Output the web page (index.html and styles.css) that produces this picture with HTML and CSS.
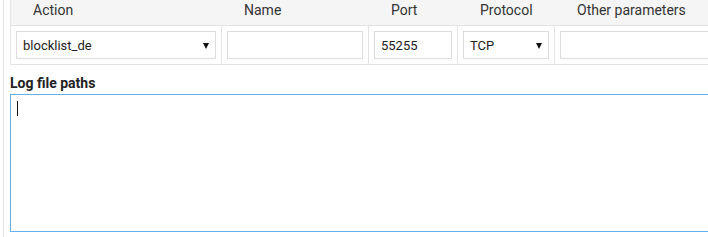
FILE: index.html
```html
<!DOCTYPE html>
<html lang="en">
<head>
    <meta charset="UTF-8">
    <title>Jail action</title>
    <link rel="stylesheet" href="styles.css">
</head>
<body>

    <!-- Panel with light left rule -->
    <div class="panel">

        <!-- Action table -->
        <div class="action-table">
            <div class="table-head">
                <div class="head-cell">Action</div>
                <div class="head-cell">Name</div>
                <div class="head-cell">Port</div>
                <div class="head-cell">Protocol</div>
                <div class="head-cell">Other parameters</div>
            </div>
            <div class="table-row">
                <div class="cell">
                    <div class="select-field">
                        <span>blocklist_de</span>
                        <span class="arrow"></span>
                    </div>
                </div>
                <div class="cell">
                    <input type="text" class="input-field" value="">
                </div>
                <div class="cell">
                    <input type="text" class="input-field" value="55255">
                </div>
                <div class="cell">
                    <div class="select-field">
                        <span>TCP</span>
                        <span class="arrow"></span>
                    </div>
                </div>
                <div class="cell">
                    <input type="text" class="input-field" value="">
                </div>
            </div>
        </div>

        <label class="field-label">Log file paths</label>
        <div class="log-box"><span class="caret"></span></div>
    </div>

</body>
</html>
```

FILE: styles.css
```css
body {
    margin: 0;
    font-family: Roboto, "Liberation Sans", Arial, sans-serif;
    color: #333;
    background-color: white;
    overflow: hidden;
    width: 708px;
    height: 237px;
}

* {
    box-sizing: border-box;
}

/* Light rule down the left side */
.panel {
    margin-left: 3px;
    border-left: 1px solid #e6e6e6;
    padding-left: 6px;
    width: 800px;
    height: 237px;
}

.action-table {
    border-left: 1px solid #e3e3e3;
}

.table-head,
.table-row {
    display: grid;
    grid-template-columns: 211px 147px 89px 97px 1fr;
    border-bottom: 1px solid #e3e3e3;
}

.table-head {
    background-color: #f5f5f5;
    height: 26px;
}

.head-cell {
    font-size: 14px;
    line-height: 20px;
    padding-left: 22px;
    color: #333;
}

.cell {
    padding: 5px;
    border-right: 1px solid #e3e3e3;
}

.input-field,
.select-field {
    width: 100%;
    height: 28px;
    border: 1px solid #ddd;
    border-radius: 0;
    padding: 0 6px;
    font-family: inherit;
    font-size: 13px;
    color: #222;
    background-color: white;
    outline: none;
    margin: 0;
}

.select-field {
    display: flex;
    justify-content: space-between;
    align-items: center;
}

.arrow {
    width: 0;
    height: 0;
    border-left: 3.5px solid transparent;
    border-right: 3.5px solid transparent;
    border-top: 6px solid #111;
    margin-top: 2px;
}

.field-label {
    display: block;
    margin-top: 10px;
    font-size: 14px;
    font-weight: bold;
    line-height: 17px;
    color: #222;
}

/* Focused textarea look */
.log-box {
    margin-top: 2px;
    height: 138px;
    border: 1px solid #66afe9;
    padding: 6px;
}

.caret {
    display: block;
    width: 1px;
    height: 15px;
    background-color: #111;
}
```
